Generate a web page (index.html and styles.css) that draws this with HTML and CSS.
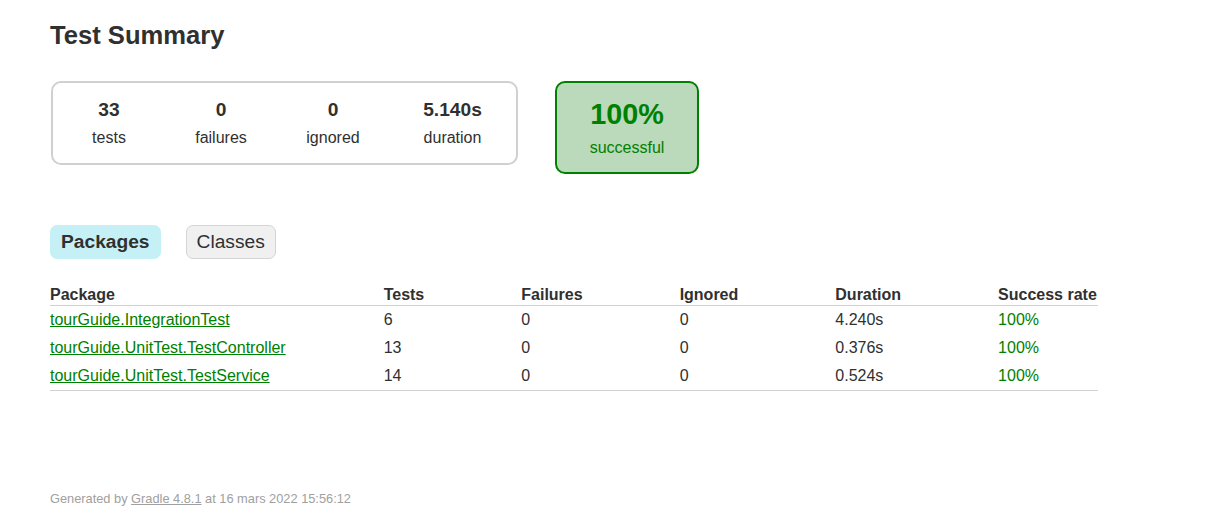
FILE: index.html
```html
<!DOCTYPE html>
<html>
<head>
<meta charset="utf-8">
<title>Test results - Test Summary</title>
<link rel="stylesheet" href="styles.css">
</head>
<body>
<div class="content">
  <h1 class="title">Test Summary</h1>
  <div class="summary">
    <div class="summary-group">
      <div class="info-box"><div class="counter">33</div><p>tests</p></div>
      <div class="info-box"><div class="counter">0</div><p>failures</p></div>
      <div class="info-box"><div class="counter">0</div><p>ignored</p></div>
      <div class="info-box info-box-duration"><div class="counter">5.140s</div><p>duration</p></div>
    </div>
    <div class="info-box success-rate">
      <div class="percent">100%</div>
      <p>successful</p>
    </div>
  </div>
  <div class="tabs">
    <ul class="tab-links">
      <li class="tab-link selected"><a href="#tab0">Packages</a></li>
      <li class="tab-link"><a href="#tab1">Classes</a></li>
    </ul>
    <div class="tab">
      <table class="results">
        <thead>
          <tr>
            <th>Package</th>
            <th>Tests</th>
            <th>Failures</th>
            <th>Ignored</th>
            <th>Duration</th>
            <th>Success rate</th>
          </tr>
        </thead>
        <tbody>
          <tr>
            <td class="success"><a href="#p1">tourGuide.IntegrationTest</a></td>
            <td>6</td>
            <td>0</td>
            <td>0</td>
            <td>4.240s</td>
            <td class="success">100%</td>
          </tr>
          <tr>
            <td class="success"><a href="#p2">tourGuide.UnitTest.TestController</a></td>
            <td>13</td>
            <td>0</td>
            <td>0</td>
            <td>0.376s</td>
            <td class="success">100%</td>
          </tr>
          <tr>
            <td class="success"><a href="#p3">tourGuide.UnitTest.TestService</a></td>
            <td>14</td>
            <td>0</td>
            <td>0</td>
            <td>0.524s</td>
            <td class="success">100%</td>
          </tr>
        </tbody>
      </table>
    </div>
  </div>
  <div class="footer">
    Generated by <a href="#gradle">Gradle 4.8.1</a> at 16 mars 2022 15:56:12
  </div>
</div>
</body>
</html>
```

FILE: styles.css
```css
html, body {
  margin: 0;
  padding: 0;
  background: #ffffff;
}

body {
  font-family: "Liberation Sans", Arial, sans-serif;
  font-size: 16px;
  color: #303030;
}

a {
  color: #303030;
}

.content {
  padding: 21px 50px 30px 50px;
}

.title {
  font-size: 25.6px;
  font-weight: bold;
  margin: 0 0 10px 0;
  white-space: nowrap;
}

.summary {
  display: flex;
  align-items: flex-start;
  padding: 1px;
  margin-top: 30px;
  margin-bottom: 40px;
}

.summary-group {
  display: flex;
  gap: 2px;
  padding: 1px;
  border: solid 2px #d0d0d0;
  border-radius: 10px;
}

.info-box {
  width: 110px;
  padding: 15px 0;
  text-align: center;
}

.info-box p {
  margin: 0;
}

.info-box-duration {
  width: 125px;
}

.counter,
.percent {
  font-size: 19.2px;
  font-weight: bold;
  margin-bottom: 8px;
}

.success-rate {
  width: 140px;
  margin-left: 37px;
  border: solid 2px #008000;
  border-radius: 10px;
  background-color: #bbd9bb;
  color: #008000;
}

.success-rate .percent {
  font-size: 28.8px;
}

.tab-links {
  display: flex;
  gap: 25px;
  list-style: none;
  margin: 16px 0;
  padding: 10px 0;
}

.tab-link {
  padding: 5px 10px;
  border: solid 1px #d4d4d4;
  border-radius: 7px;
  background-color: #f0f0f0;
}

.tab-link.selected {
  background-color: #c5f0f5;
  border-color: #c5f0f5;
}

.tab-link a {
  display: block;
  font-size: 19.2px;
  text-decoration: none;
  color: #303030;
}

.tab-link.selected a {
  font-weight: bold;
}

.results {
  border-collapse: collapse;
  border-bottom: solid #d0d0d0 1px;
}

.results th {
  text-align: left;
  white-space: nowrap;
  font-weight: bold;
  padding: 1px 1px 1px 96px;
  border-bottom: solid #d0d0d0 1px;
}

.results td {
  white-space: nowrap;
  padding: 5px 1px 5px 96px;
}

.results th:first-child,
.results td:first-child {
  padding-left: 0;
  padding-right: 2px;
}

.success,
.success a {
  color: #008000;
}

.footer {
  margin-top: 100px;
  font-size: 12.8px;
  white-space: nowrap;
  color: #a0a0a0;
}

.footer a {
  color: #a0a0a0;
}
```
